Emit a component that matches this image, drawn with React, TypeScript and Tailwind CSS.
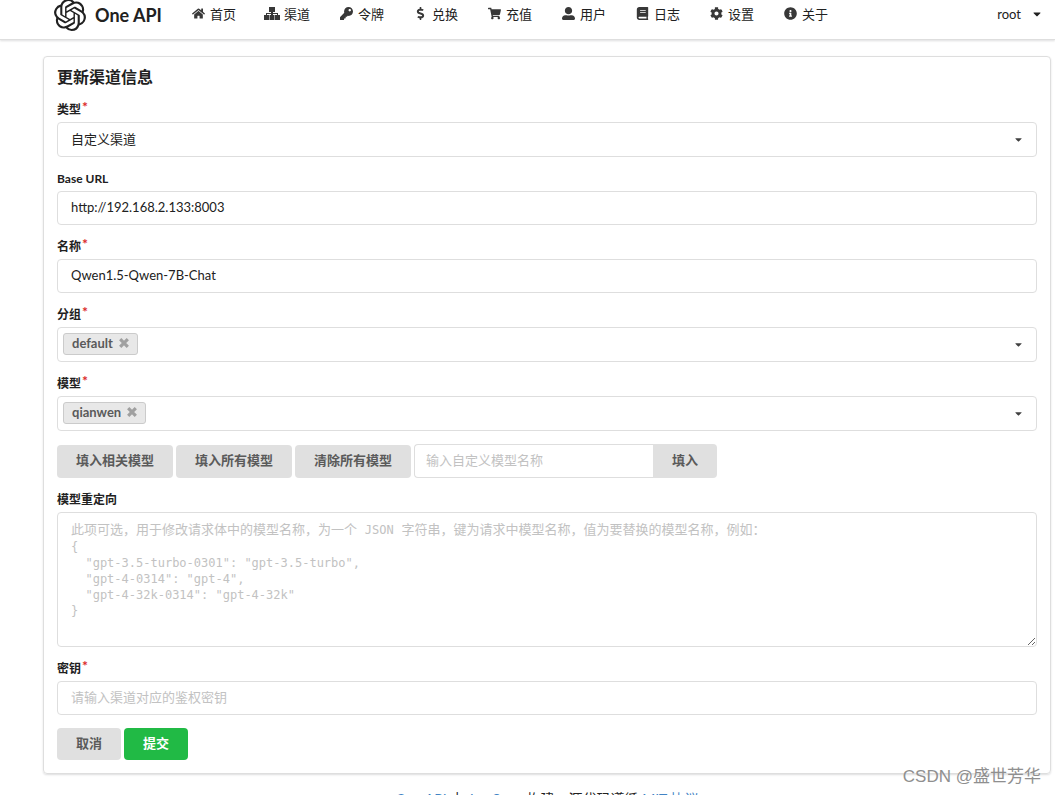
import { useState } from "react";
import type { ComponentType, ReactNode } from "react";
import {
  FaBook,
  FaCaretDown,
  FaCog,
  FaDollarSign,
  FaHome,
  FaInfoCircle,
  FaKey,
  FaShoppingCart,
  FaUserAlt,
} from "react-icons/fa";
import { SiOpenai } from "react-icons/si";
import clsx from "clsx";

function SitemapIcon({ className }: { className?: string }) {
  return (
    <svg viewBox="0 0 16 13" className={className} fill="currentColor">
      <path d="M5 0h6v5H9v1h5v2h2v5h-5V8h2V7H9v1h1.5v5h-5V8H7V7H3v1h2v5H0V8h2V6h5V5H5z" />
    </svg>
  );
}

const navItems: { label: string; icon: ComponentType<{ className?: string }> }[] = [
  { label: "首页", icon: FaHome },
  { label: "渠道", icon: SitemapIcon },
  { label: "令牌", icon: FaKey },
  { label: "兑换", icon: FaDollarSign },
  { label: "充值", icon: FaShoppingCart },
  { label: "用户", icon: FaUserAlt },
  { label: "日志", icon: FaBook },
  { label: "设置", icon: FaCog },
  { label: "关于", icon: FaInfoCircle },
];

const mappingExample = `{
  "gpt-3.5-turbo-0301": "gpt-3.5-turbo",
  "gpt-4-0314": "gpt-4",
  "gpt-4-32k-0314": "gpt-4-32k"
}`;

const inputClass =
  "block w-full rounded border border-[#dedede] bg-white px-[13px] pb-0.5 text-[13px] text-[#212121] placeholder:text-[#c2c2c2] outline-none focus:border-[#85b7d9]";

function Header() {
  return (
    <header className="flex h-10 items-center border-b border-[#dedede] pb-2.5 pl-[54px] pr-3 shadow-[0_1px_2px_0_rgba(34,36,38,0.15)]">
      <a href="#home" className="flex shrink-0 items-center gap-[9px]">
        <SiOpenai className="h-8 w-8" />
        <span className="text-lg font-bold leading-6">One API</span>
      </a>
      <nav className="ml-[29px] flex gap-[29px] pb-0.5">
        {navItems.map(({ label, icon: Icon }) => (
          <a key={label} href={`#${label}`} className="flex items-center gap-1 whitespace-nowrap">
            <span className="flex w-[15px] justify-center">
              <Icon className="h-[13px] w-auto shrink-0 text-[#383838]" />
            </span>
            {label}
          </a>
        ))}
      </nav>
      <button type="button" className="ml-auto flex items-center gap-2.5 pb-0.5">
        root
        <FaCaretDown className="h-3 w-auto" />
      </button>
    </header>
  );
}

function Field({
  id,
  label,
  required,
  children,
}: {
  id: string;
  label: string;
  required?: boolean;
  children: ReactNode;
}) {
  return (
    <div className="mb-[13px]">
      <label htmlFor={id} className="mb-1 flex h-[17px] items-center text-xs font-bold">
        {label}
        {required && <span className="ml-px self-start text-sm leading-3 text-[#db2828]">*</span>}
      </label>
      {children}
    </div>
  );
}

function RemoveIcon() {
  return (
    <svg viewBox="0 0 10 10" className="h-2.5 w-2.5" stroke="currentColor" strokeWidth="3.2">
      <path d="M1.2 1.2 8.8 8.8M8.8 1.2 1.2 8.8" />
    </svg>
  );
}

function TagSelect({ id, initial }: { id: string; initial: string[] }) {
  const [tags, setTags] = useState(initial);

  return (
    <div className="flex h-[35px] items-center rounded border border-[#dedede] pl-[5px] pr-3">
      <div className="flex gap-1 pb-px">
        {tags.map((tag) => (
          <span
            key={tag}
            className="flex h-[22px] items-center gap-1.5 rounded-[3px] border border-[#cbcbcb] bg-[#e8e8e8] px-2 pb-0.5 font-bold text-[#5a5a5a]"
          >
            {tag}
            <button
              type="button"
              aria-label={`移除 ${tag}`}
              onClick={() => setTags(tags.filter((t) => t !== tag))}
              className="text-[#a0a0a0]"
            >
              <RemoveIcon />
            </button>
          </span>
        ))}
      </div>
      <button id={id} type="button" aria-label="展开选项" className="ml-auto text-[#404040]">
        <FaCaretDown className="h-[11px] w-auto" />
      </button>
    </div>
  );
}

function Button({
  children,
  primary,
  className,
}: {
  children: ReactNode;
  primary?: boolean;
  className?: string;
}) {
  return (
    <button
      type="button"
      className={clsx(
        "whitespace-nowrap px-[19px] pb-[3px] font-bold",
        primary ? "bg-[#21ba45] text-white" : "bg-[#e0e0e0] text-[#5a5a5a]",
        className ?? "h-8 rounded"
      )}
    >
      {children}
    </button>
  );
}

function ModelMapping() {
  const [value, setValue] = useState("");

  return (
    <div className="relative">
      <textarea
        id="mapping"
        aria-describedby="mapping-hint"
        value={value}
        onChange={(e) => setValue(e.target.value)}
        className={clsx(inputClass, "h-[135px] resize-y pt-2 font-['DejaVu_Sans_Mono','Noto_Sans_CJK_SC',monospace]")}
      />
      {/* Hint is mixed size, so it can't be a plain placeholder */}
      {!value && (
        <div
          id="mapping-hint"
          className="pointer-events-none absolute inset-x-0 top-0 px-3.5 py-[9px] font-['DejaVu_Sans_Mono','Noto_Sans_CJK_SC',monospace] text-xs text-[#c2c2c2]"
        >
          <p className="text-[13px] leading-[18px]">
            此项可选，用于修改请求体中的模型名称，为一个 <span className="text-xs">JSON</span>{" "}
            字符串，键为请求中模型名称，值为要替换的模型名称，例如：
          </p>
          <pre className="font-['DejaVu_Sans_Mono',monospace] leading-4">{mappingExample}</pre>
        </div>
      )}
    </div>
  );
}

function EditChannel() {
  return (
    <main className="ml-[43px] mr-1 mt-4 rounded border border-[#dedede] p-[13px] pt-3 shadow-[0_1px_2px_0_rgba(34,36,38,0.15)]">
      <h1 className="mb-4 text-base font-bold leading-4">更新渠道信息</h1>
      <form>
        <Field id="type" label="类型" required>
          <div className="relative">
            <select id="type" className={clsx(inputClass, "h-[35px] appearance-none")}>
              <option>自定义渠道</option>
            </select>
            <FaCaretDown className="pointer-events-none absolute right-[13px] top-3 h-[11px] w-auto text-[#404040]" />
          </div>
        </Field>
        <Field id="base-url" label="Base URL">
          <input id="base-url" className={clsx(inputClass, "h-[34px]")} defaultValue="http://192.168.2.133:8003" />
        </Field>
        <Field id="name" label="名称" required>
          <input id="name" className={clsx(inputClass, "h-[34px]")} defaultValue="Qwen1.5-Qwen-7B-Chat" />
        </Field>
        <Field id="groups" label="分组" required>
          <TagSelect id="groups" initial={["default"]} />
        </Field>
        <Field id="models" label="模型" required>
          <TagSelect id="models" initial={["qianwen"]} />
        </Field>
        <div className="mb-[13px] flex items-end gap-[3px]">
          <Button className="h-[33px] rounded">填入相关模型</Button>
          <Button className="h-[33px] rounded">填入所有模型</Button>
          <Button className="h-[33px] rounded">清除所有模型</Button>
          <div className="flex">
            <input
              aria-label="自定义模型名称"
              placeholder="输入自定义模型名称"
              className="h-[34px] w-[239px] rounded-l border border-r-0 border-[#dedede] px-[11px] pb-0.5 outline-none placeholder:text-[#c2c2c2]"
            />
            <Button className="h-[34px] rounded-r">填入</Button>
          </div>
        </div>
        <Field id="mapping" label="模型重定向">
          <ModelMapping />
        </Field>
        <Field id="key" label="密钥" required>
          <input id="key" className={clsx(inputClass, "h-[34px]")} placeholder="请输入渠道对应的鉴权密钥" />
        </Field>
        <div className="flex gap-[3px]">
          <Button>取消</Button>
          <Button primary>提交</Button>
        </div>
      </form>
    </main>
  );
}

export default function App() {
  return (
    <div className="relative h-screen overflow-hidden bg-white font-['Lato','Noto_Sans_CJK_SC',sans-serif] text-[13px] leading-[18px] text-[#212121]">
      <Header />
      <EditChannel />
      <footer className="ml-[43px] mr-1 mt-4 text-center text-sm leading-[18px]">
        <a href="#one-api" className="text-[#4183c4]">One API</a> 由{" "}
        <a href="#author" className="text-[#4183c4]">JustSong</a> 构建，源代码遵循{" "}
        <a href="#license" className="text-[#4183c4]">MIT 协议</a>
      </footer>
      <div className="absolute bottom-1.5 right-3.5 font-['Liberation_Sans','Noto_Sans_CJK_SC',sans-serif] text-[17px] leading-6 text-[#8f8f8f]">
        CSDN @盛世芳华
      </div>
    </div>
  );
}
